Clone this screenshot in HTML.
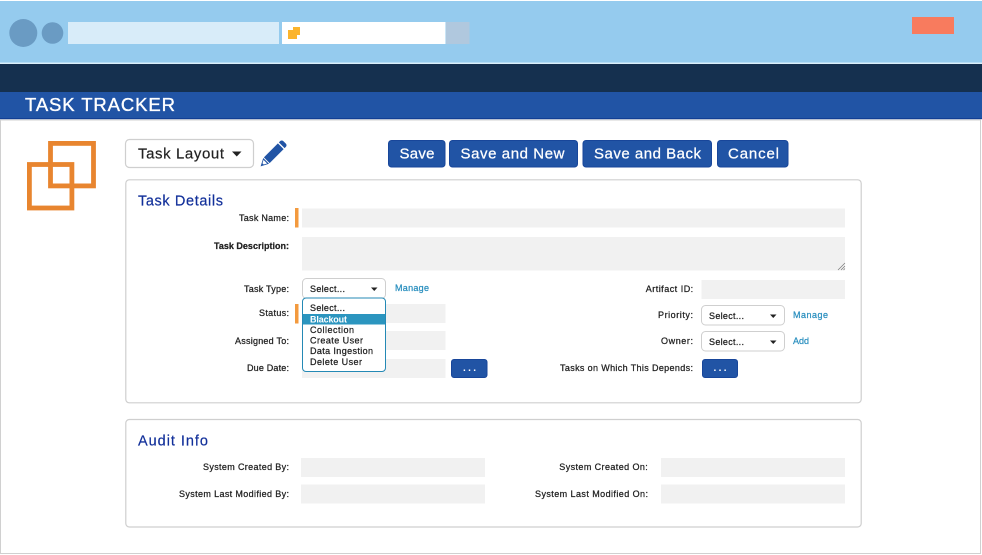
<!DOCTYPE html>
<html lang="en">
<head>
<meta charset="utf-8">
<title>Task Tracker</title>
<style>
html,body{margin:0;padding:0;background:#fff;width:982px;height:555px;overflow:hidden}
svg{display:block;font-family:"Liberation Sans",sans-serif;filter:blur(.3px)}
.l{font-size:9px;fill:#222;stroke:#222;stroke-width:.25}
.b{font-size:15px;fill:#fff;stroke:#fff;stroke-width:.25}
.h{font-size:14.5px;fill:#12309a;stroke:#12309a;stroke-width:.2}
.m{font-size:9px;fill:#2a8fbf;stroke:#2a8fbf;stroke-width:.25}
.d{font-size:10px;fill:#fff;font-weight:bold}
.btn{fill:#2154a5;stroke:#18469a;stroke-width:1}
.i{fill:#f1f1f1}
.p{fill:#fff;stroke:#cfcfcf;stroke-width:1.2}
.s{fill:#fff;stroke:#cfcfcf;stroke-width:1}
</style>
</head>
<body>
<svg width="982" height="555" viewBox="0 0 982 555" xmlns="http://www.w3.org/2000/svg">
<rect x="0.500" y="120" width="980" height="433.500" fill="#fff" stroke="#d0d0d0"/>
<rect x="0" y="1" width="982" height="62" fill="#95cbee"/>
<rect x="0" y="62" width="982" height="1.500" fill="#b5dcf5"/>
<rect x="0" y="64" width="982" height="28" fill="#15304f"/>
<rect x="0" y="92" width="982" height="27" fill="#2154a5"/>
<rect x="0" y="118" width="982" height="1.200" fill="#123f94"/>
<circle cx="23.300" cy="33" r="14" fill="#6a9bc3"/>
<circle cx="52.500" cy="33" r="10.800" fill="#6a9bc3"/>
<rect x="68" y="22" width="211" height="22" fill="#d8ecf9"/>
<rect x="282" y="22" width="163.500" height="22" fill="#fff"/>
<rect x="446" y="22" width="23.500" height="22" fill="#b0c8de"/>
<rect x="293" y="27" width="7" height="8" fill="#fbb42c"/>
<rect x="288" y="30" width="9" height="9" fill="#fbb42c"/>
<rect x="912" y="17" width="42" height="17" fill="#f87b5e"/>
<text x="25" y="111" font-size="18.500" fill="#fff" stroke="#fff" stroke-width=".35" textLength="150">TASK TRACKER</text>

<g fill="none" stroke="#e8852f" stroke-width="4.800">
<rect x="50.500" y="143.400" width="43" height="42.500"/>
<rect x="29.400" y="164.500" width="42.500" height="43.500"/>
</g>

<rect x="125.500" y="139.500" width="128" height="28" rx="4" class="p"/>
<text x="138" y="158.500" font-size="15" fill="#222" stroke="#222" stroke-width=".2" textLength="86">Task Layout</text>
<path d="M232 151.500h9.500l-4.750 5z" fill="#222"/>
<g transform="translate(272.500 154.500) rotate(45) scale(.9)" fill="#2154a5">
<path d="M-4.500-14.500v-2a2.500 2.500 0 0 1 2.500-2.500h4a2.500 2.500 0 0 1 2.500 2.500v2z"/>
<rect x="-4.500" y="-13" width="9" height="22"/>
<path d="M-4.500 10h9l-4.500 8.700z"/>
<path d="M-2.800 11.300h5.600l-2.800 5.200z" fill="#fff"/>
<path d="M-1.200 14.800h2.400l-1.200 2.400z"/>
</g>

<rect x="388.500" y="140.500" width="56.500" height="26.500" rx="3" class="btn"/>
<text x="399.500" y="158.500" class="b" textLength="35">Save</text>
<rect x="449.500" y="140.500" width="128" height="26.500" rx="3" class="btn"/>
<text x="460.500" y="158.500" class="b" textLength="104">Save and New</text>
<rect x="583" y="140.500" width="128.500" height="26.500" rx="3" class="btn"/>
<text x="594" y="158.500" class="b" textLength="107">Save and Back</text>
<rect x="717.500" y="140.500" width="70.500" height="26.500" rx="3" class="btn"/>
<text x="728" y="158.500" class="b" textLength="51">Cancel</text>

<rect x="125.800" y="179.800" width="735.400" height="223" rx="3.500" class="p"/>
<text x="138" y="205.500" class="h" textLength="85">Task Details</text>

<text x="239" y="221" class="l" textLength="50">Task Name:</text>
<rect x="295" y="208" width="3.500" height="19.500" fill="#f39a3e"/>
<rect x="302" y="208.500" width="543" height="19" class="i"/>

<text x="214" y="249" class="l" font-weight="bold" textLength="75">Task Description:</text>
<rect x="302" y="237" width="543" height="33.500" class="i"/>
<path d="M838 270l7-7M841 270l4-4M843.500 270l1.500-1.500" stroke="#777" stroke-width=".7" fill="none"/>

<text x="244" y="292" class="l" textLength="45">Task Type:</text>
<text x="395" y="291" class="m" textLength="34">Manage</text>

<text x="259" y="316" class="l" textLength="30">Status:</text>
<rect x="295" y="304" width="3.500" height="19.500" fill="#f39a3e"/>
<rect x="302" y="304" width="143.500" height="19" class="i"/>
<text x="235" y="344" class="l" textLength="54">Assigned To:</text>
<rect x="302" y="331" width="143.500" height="19" class="i"/>
<text x="247" y="371" class="l" textLength="42">Due Date:</text>
<rect x="302" y="359" width="143.500" height="19" class="i"/>
<rect x="451.500" y="359.500" width="35.500" height="18" rx="2.500" class="btn"/>
<text x="463" y="371" class="d" textLength="13">...</text>

<rect x="302.500" y="278.500" width="83" height="20" rx="4" class="s"/>
<text x="310" y="292" class="l" textLength="35">Select...</text>
<path d="M371 287.500h6.500l-3.250 3.500z" fill="#222"/>

<rect x="302.500" y="298" width="83" height="73.500" rx="3.500" fill="#fff" stroke="#2489b5" stroke-width="1"/>
<rect x="303" y="314" width="82" height="10.500" fill="#2b95bf"/>
<text x="310" y="311" class="l" textLength="35">Select...</text>
<text x="310" y="322.500" font-size="9" fill="#fff" font-weight="bold" textLength="37">Blackout</text>
<text x="310" y="333" class="l" textLength="44">Collection</text>
<text x="310" y="343.500" class="l" textLength="53">Create User</text>
<text x="310" y="354" class="l" textLength="63">Data Ingestion</text>
<text x="310" y="365" class="l" textLength="52">Delete User</text>

<text x="645.700" y="292" class="l" textLength="47.500">Artifact ID:</text>
<rect x="701.500" y="280" width="143.500" height="19" class="i"/>

<text x="658" y="318" class="l" textLength="35">Priority:</text>
<rect x="701.500" y="305.500" width="83" height="19.500" rx="4" class="s"/>
<text x="709" y="319" class="l" textLength="35">Select...</text>
<path d="M770 314.500h6.500l-3.250 3.500z" fill="#222"/>
<text x="793" y="318" class="m" textLength="35">Manage</text>

<text x="661" y="344" class="l" textLength="32">Owner:</text>
<rect x="701.500" y="331.500" width="83" height="19.500" rx="4" class="s"/>
<text x="709" y="345" class="l" textLength="35">Select...</text>
<path d="M770 340.500h6.500l-3.250 3.500z" fill="#222"/>
<text x="793" y="344" class="m" textLength="16">Add</text>

<text x="560" y="371" class="l" textLength="133">Tasks on Which This Depends:</text>
<rect x="702.500" y="359.500" width="35" height="18" rx="2.500" class="btn"/>
<text x="713.500" y="371" class="d" textLength="13">...</text>

<rect x="125.800" y="419.500" width="735.400" height="107.500" rx="3.500" class="p"/>
<text x="138" y="445.500" class="h" textLength="70">Audit Info</text>

<text x="203" y="470" class="l" textLength="86">System Created By:</text>
<rect x="301" y="458" width="184" height="19" class="i"/>
<text x="179" y="497" class="l" textLength="110">System Last Modified By:</text>
<rect x="301" y="484.500" width="184" height="19" class="i"/>
<text x="559.300" y="470" class="l" textLength="88.500">System Created On:</text>
<rect x="661" y="458" width="184" height="19" class="i"/>
<text x="535" y="497" class="l" textLength="113">System Last Modified On:</text>
<rect x="661" y="484.500" width="184" height="19" class="i"/>
</svg>
</body>
</html>
